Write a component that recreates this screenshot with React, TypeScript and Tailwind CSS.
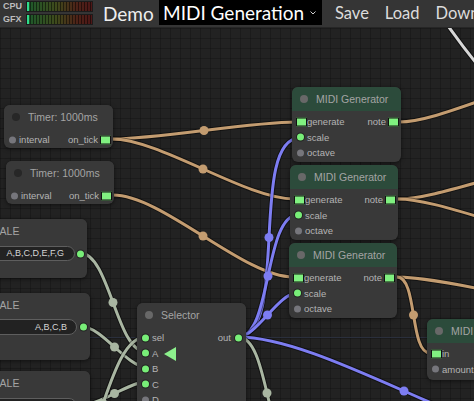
import React from "react";

type Pt = [number, number];

const TAN = "#c39c70";
const BLUE = "#7d7df2";
const SAGE = "#a9b6a2";

const links: { a: Pt; b: Pt; c: string }[] = [
  { a: [112, 139], b: [296, 122], c: TAN },
  { a: [112, 139], b: [294, 199], c: TAN },
  { a: [113, 195], b: [293, 277], c: TAN },
  { a: [399, 122], b: [560, 80], c: TAN },
  { a: [398, 199], b: [560, 165], c: TAN },
  { a: [398, 199], b: [560, 235], c: TAN },
  { a: [397, 277], b: [560, 300], c: TAN },
  { a: [397, 277], b: [430, 353], c: TAN },
  { a: [238, 337], b: [300, 138], c: BLUE },
  { a: [238, 337], b: [298, 215], c: BLUE },
  { a: [238, 337], b: [297, 293], c: BLUE },
  { a: [238, 337], b: [570, 445], c: BLUE },
  { a: [80, 253], b: [146, 352], c: SAGE },
  { a: [83, 327], b: [146, 367], c: SAGE },
  { a: [83, 405], b: [146, 382], c: SAGE },
  { a: [60, 470], b: [146, 337], c: SAGE },
  { a: [238, 337], b: [296, 449], c: SAGE },
];

function bez(a: Pt, b: Pt) {
  const dist = Math.hypot(b[0] - a[0], b[1] - a[1]) * 0.25;
  const c1: Pt = [a[0] + dist, a[1]];
  const c2: Pt = [b[0] - dist, b[1]];
  const d = `M${a[0]} ${a[1]} C${c1[0]} ${c1[1]} ${c2[0]} ${c2[1]} ${b[0]} ${b[1]}`;
  const mx = (a[0] + 3 * c1[0] + 3 * c2[0] + b[0]) / 8;
  const my = (a[1] + 3 * c1[1] + 3 * c2[1] + b[1]) / 8;
  return { d, mx, my };
}

function Links() {
  return (
    <svg className="absolute left-0 top-0" width={474} height={373} viewBox="0 28 474 373">
      <line x1="0" y1="337.5" x2="474" y2="337.5" stroke="#2a2f3c" strokeWidth="1" />
      <path d="M436 10 C452 30 458 42 482 70" fill="none" stroke="rgba(0,0,0,0.5)" strokeWidth="5" />
      <path d="M436 10 C452 30 458 42 482 70" fill="none" stroke="#d6d6d6" strokeWidth="3" />
      {links.map((l, i) => {
        const { d, mx, my } = bez(l.a, l.b);
        return (
          <g key={i}>
            <path d={d} fill="none" stroke="rgba(0,0,0,0.45)" strokeWidth="5" />
            <path d={d} fill="none" stroke={l.c} strokeWidth="3" />
            <circle cx={mx} cy={my} r="4.5" fill={l.c} />
          </g>
        );
      })}
    </svg>
  );
}

type Slot = "on" | "off" | "sq" | undefined;

function InSlot({ t }: { t: Slot }) {
  if (t === "sq")
    return <span className="absolute left-[4px] top-1/2 block h-[9px] w-[11px] -translate-y-1/2 border border-[#111] bg-[#80f080]" />;
  if (t === "on")
    return <span className="absolute left-[5px] top-1/2 block h-[7px] w-[7px] -translate-y-1/2 rounded-full bg-[#78ee78] ring-1 ring-black/40" />;
  if (t === "off")
    return <span className="absolute left-[5px] top-1/2 block h-[7px] w-[7px] -translate-y-1/2 rounded-full bg-[#76767c]" />;
  return null;
}

function OutSlot({ t }: { t: Slot }) {
  if (t === "sq")
    return <span className="absolute right-[2px] top-1/2 block h-[9px] w-[11px] -translate-y-1/2 border border-[#111] bg-[#80f080]" />;
  if (t === "on")
    return <span className="absolute right-[4.5px] top-1/2 block h-[7px] w-[7px] -translate-y-1/2 rounded-full bg-[#78ee78] ring-1 ring-black/40" />;
  return null;
}

function Row({ l, r, li, ro }: { l?: string; r?: string; li?: Slot; ro?: Slot }) {
  return (
    <div className="relative flex h-[15.5px] items-center justify-between text-[9.5px] leading-none text-[#b4b4b4]">
      <InSlot t={li} />
      <span className="pl-[15px]">{l}</span>
      <span className="pr-[15px]">{r}</span>
      <OutSlot t={ro} />
    </div>
  );
}

function Title({ text, green, dark }: { text: string; green?: boolean; dark?: boolean }) {
  return (
    <div
      className={
        green
          ? "flex h-[24px] items-center rounded-t-[6px] bg-[#2c4b3b]"
          : "flex h-[24px] items-center rounded-t-[6px] bg-[#393939]"
      }
    >
      <span
        className={
          dark
            ? "ml-[8px] block h-[8px] w-[8px] shrink-0 rounded-full bg-[#272727]"
            : "ml-[8px] block h-[8px] w-[8px] shrink-0 rounded-full bg-[#686868]"
        }
      />
      <span className="ml-[8px] whitespace-nowrap text-[10.5px] leading-none text-[#a4a4a4]">{text}</span>
    </div>
  );
}

const nodeBase =
  "absolute rounded-[6px] bg-[#393939] font-['Liberation_Sans',Arial,sans-serif] shadow-[0_1px_4px_rgba(0,0,0,0.55)]";

function Meter() {
  return (
    <div className="relative h-[11px] w-[67px] border border-[#1c1c1c] bg-[linear-gradient(90deg,#1d5a2c,#3f4a1c_45%,#4d2418_75%,#4e1717)]">
      <div className="absolute inset-0 bg-[repeating-linear-gradient(90deg,rgba(0,0,0,0.5)_0px,rgba(0,0,0,0.5)_1px,transparent_1px,transparent_3px)]" />
      <div className="absolute left-0 top-0 h-full w-[2px] bg-[#2fdc8c]" />
    </div>
  );
}

export default function App() {
  return (
    <div className="flex h-[401px] w-[474px] flex-col overflow-hidden bg-[#222222]">
      {/* header */}
      <div className="flex h-[28px] shrink-0 items-start border-b border-[#262626] bg-[#353535] font-['Lato',sans-serif]">
        <div className="flex w-[93px] shrink-0 flex-col gap-[2px] pl-[3px] pt-[1px] font-['Liberation_Sans',Arial,sans-serif]">
          <div className="flex h-[11px] items-center">
            <span className="w-[23px] text-[9px] font-bold leading-none text-[#bdbdbd]">CPU</span>
            <Meter />
          </div>
          <div className="flex h-[11px] items-center">
            <span className="w-[23px] text-[9px] font-bold leading-none text-[#bdbdbd]">GFX</span>
            <Meter />
          </div>
        </div>
        <div className="ml-[10px] flex h-[27px] w-[56px] shrink-0 items-center text-[19px] leading-none text-[#eeeeee]">
          Demo
        </div>
        <div className="flex h-[25px] w-[163px] shrink-0 items-center bg-black pl-[4px] text-[19px] leading-none text-white">
          <span className="whitespace-nowrap">MIDI Generation</span>
          <svg className="ml-auto mr-[6px]" width="6" height="4" viewBox="0 0 6 4">
            <path d="M0.5 0.5 L3 3 L5.5 0.5" fill="none" stroke="#d0d0d0" strokeWidth="1" />
          </svg>
        </div>
        <div className="ml-[13px] flex h-[27px] items-center gap-[16px] whitespace-nowrap text-[16.5px] leading-none text-[#dcdcdc]">
          <span>Save</span>
          <span>Load</span>
          <span>Download</span>
        </div>
      </div>

      {/* canvas */}
      <div className="relative flex-1 overflow-hidden bg-[#222222] bg-[linear-gradient(rgba(0,0,0,0.2)_1px,transparent_1px),linear-gradient(90deg,rgba(0,0,0,0.2)_1px,transparent_1px)] bg-[size:10px_10px]">
        <Links />

        {/* Timers */}
        <div className={nodeBase + " left-[4px] top-[77px] w-[109px]"}>
          <Title text="Timer: 1000ms" dark />
          <div className="pt-[3px]">
            <Row l="interval" r="on_tick" li="off" ro="sq" />
          </div>
        </div>
        <div className={nodeBase + " left-[6px] top-[133px] w-[108px]"}>
          <Title text="Timer: 1000ms" dark />
          <div className="pt-[3px]">
            <Row l="interval" r="on_tick" li="off" ro="sq" />
          </div>
        </div>

        {/* MIDI Generators */}
        <div className={nodeBase + " left-[292px] top-[59px] w-[109px]"}>
          <Title text="MIDI Generator" green />
          <div className="pt-[3px] pb-[1px]">
            <Row l="generate" r="note" li="sq" ro="sq" />
            <Row l="scale" li="on" />
            <Row l="octave" li="off" />
          </div>
        </div>
        <div className={nodeBase + " left-[290px] top-[137px] w-[108px]"}>
          <Title text="MIDI Generator" green />
          <div className="pt-[3px] pb-[1px]">
            <Row l="generate" r="note" li="sq" ro="sq" />
            <Row l="scale" li="on" />
            <Row l="octave" li="off" />
          </div>
        </div>
        <div className={nodeBase + " left-[289px] top-[215px] w-[108px]"}>
          <Title text="MIDI Generator" green />
          <div className="pt-[3px] pb-[1px]">
            <Row l="generate" r="note" li="sq" ro="sq" />
            <Row l="scale" li="on" />
            <Row l="octave" li="off" />
          </div>
        </div>

        {/* MIDI output */}
        <div className={nodeBase + " left-[427px] top-[291px] w-[110px]"}>
          <Title text="MIDI Play" green />
          <div className="pt-[3px] pb-[3px]">
            <Row l="in" li="sq" />
            <Row l="amount" li="off" />
          </div>
        </div>

        {/* Selector */}
        <div className={nodeBase + " left-[137px] top-[275px] w-[109px]"}>
          <Title text="Selector" />
          <div className="relative pt-[3px] pb-[6px]">
            <Row l="sel" r="out" li="on" ro="on" />
            <Row l="A" li="on" />
            <Row l="B" li="on" />
            <Row l="C" li="on" />
            <Row l="D" li="off" />
            <svg className="absolute left-[27px] top-[20px]" width="12" height="14" viewBox="0 0 12 14">
              <polygon points="0,7 12,0 12,14" fill="#8cf08c" />
            </svg>
          </div>
        </div>

        {/* Scales */}
        <div className={nodeBase + " left-[-39px] top-[191px] h-[59px] w-[126px]"}>
          <Title text="SCALE" />
          <div className="relative pt-[3px]">
            <div className="relative flex h-[15px] items-center">
              <div className="ml-[12px] mr-[12px] flex h-[15px] flex-1 items-center justify-end rounded-full border border-[#5e5e5e] bg-[#222222] pr-[10px] text-[9px] leading-none text-[#d6d6d6]">
                A,B,C,D,E,F,G
              </div>
              <span className="absolute right-[3.5px] top-1/2 block h-[7px] w-[7px] -translate-y-1/2 rounded-full bg-[#78ee78] ring-1 ring-black/40" />
            </div>
          </div>
        </div>
        <div className={nodeBase + " left-[-39px] top-[265px] h-[67px] w-[129px]"}>
          <Title text="SCALE" />
          <div className="relative pt-[2px]">
            <div className="relative flex h-[16px] items-center">
              <div className="ml-[12px] mr-[13px] flex h-[16px] flex-1 items-center justify-end rounded-full border border-[#5e5e5e] bg-[#222222] pr-[9px] text-[9px] leading-none text-[#d6d6d6]">
                A,B,C,B
              </div>
              <span className="absolute right-[3.5px] top-1/2 block h-[7px] w-[7px] -translate-y-1/2 rounded-full bg-[#78ee78] ring-1 ring-black/40" />
            </div>
          </div>
        </div>
        <div className={nodeBase + " left-[-39px] top-[343px] h-[70px] w-[129px]"}>
          <Title text="SCALE" />
          <div className="relative pt-[3px]">
            <div className="relative flex h-[16px] items-center">
              <div className="ml-[12px] mr-[13px] flex h-[16px] flex-1 items-center justify-end rounded-full border border-[#5e5e5e] bg-[#222222] pr-[9px] text-[9px] leading-none text-[#d6d6d6]">
                A,C,E
              </div>
              <span className="absolute right-[3.5px] top-1/2 block h-[7px] w-[7px] -translate-y-1/2 rounded-full bg-[#78ee78] ring-1 ring-black/40" />
            </div>
          </div>
        </div>
      </div>
    </div>
  );
}
